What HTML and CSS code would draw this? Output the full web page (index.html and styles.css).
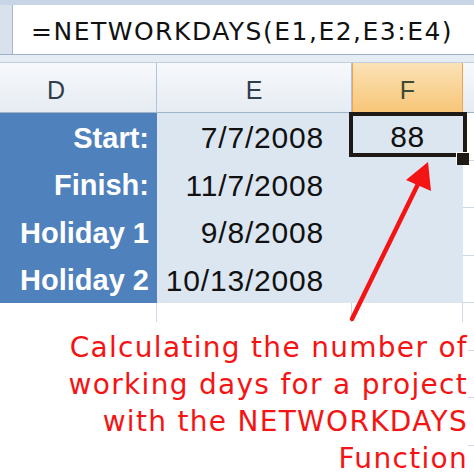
FILE: index.html
```html
<!DOCTYPE html>
<html>
<head>
<meta charset="utf-8">
<link rel="stylesheet" href="styles.css">
</head>
<body>
<div class="sheet">
  <div class="top-strip"></div>
  <div class="formula-bar">
    <div class="fx-stub"></div>
    <div class="fx-input">=NETWORKDAYS(E1,E2,E3:E4)</div>
  </div>
  <div class="bar-gap"></div>
  <div class="grid">
    <div class="hdr hdr-d">D</div>
    <div class="hdr">E</div>
    <div class="hdr hdr-active">F</div>
    <div class="hdr hdr-rest"></div>

    <div class="lbl">Start:</div><div class="val">7/7/2008</div><div class="res">88</div><div class="rest"></div>
    <div class="lbl">Finish:</div><div class="val">11/7/2008</div><div class="res"></div><div class="rest"></div>
    <div class="lbl">Holiday 1</div><div class="val">9/8/2008</div><div class="res"></div><div class="rest"></div>
    <div class="lbl">Holiday 2</div><div class="val">10/13/2008</div><div class="res"></div><div class="rest"></div>

    <div class="empty"></div><div class="empty"></div><div class="empty"></div><div class="rest"></div>
    <div class="empty"></div><div class="empty"></div><div class="empty"></div><div class="rest"></div>
    <div class="empty"></div><div class="empty"></div><div class="empty"></div><div class="rest"></div>
    <div class="empty"></div><div class="empty"></div><div class="empty"></div><div class="rest"></div>
  </div>

  <div class="selection"></div>
  <div class="fill-handle"></div>

  <div class="caption">Calculating the number of<br>working days for a project<br>with the NETWORKDAYS<br>Function</div>

  <svg class="arrow" width="474" height="474" viewBox="0 0 474 474">
    <line x1="352" y1="319" x2="420" y2="180" stroke="#f51414" stroke-width="4.5" stroke-linecap="round"/>
    <polygon points="428,162 406,180 431,191" fill="#f51414"/>
  </svg>
</div>
</body>
</html>
```

FILE: styles.css
```css
html, body {
  margin: 0;
  padding: 0;
}
body {
  width: 474px;
  height: 474px;
  overflow: hidden;
  background: #ffffff;
}
.sheet {
  position: relative;
  width: 474px;
  height: 474px;
  overflow: hidden;
}
.top-strip {
  height: 5px;
  background: #c8d5e6;
}
.formula-bar {
  display: flex;
  height: 49px;
  border-bottom: 1px solid #9fb1c8;
}
.fx-stub {
  width: 12px;
  background: #d9e1ec;
  border-right: 1px solid #a7b7cc;
}
.fx-input {
  flex: 1;
  background: #ffffff;
  font-family: "DejaVu Sans", sans-serif;
  font-size: 25px;
  letter-spacing: 1.5px;
  color: #111111;
  padding-left: 18px;
  padding-top: 4px;
  display: flex;
  align-items: center;
  white-space: nowrap;
}
.bar-gap {
  height: 7px;
  background: #e6ecf4;
  border-bottom: 1px solid #c3cfdf;
}
.grid {
  display: grid;
  grid-template-columns: 157px 195px 111px 1fr;
  grid-template-rows: 50px repeat(8, 47.5px);
  font-family: "Liberation Sans", Arial, sans-serif;
}
.hdr {
  box-sizing: border-box;
  background: linear-gradient(#f7f9fc, #e6ecf3);
  border-right: 1px solid #b3c3d7;
  border-bottom: 1px solid #9fb3ca;
  display: flex;
  align-items: center;
  justify-content: center;
  font-size: 25px;
  color: #2f3d4e;
  padding-top: 5px;
}
.hdr-d {
  padding-right: 44px;
}
.hdr-active {
  background: linear-gradient(#fbe2b6, #f7c678);
  border-left: 1px solid #f2a24a;
  border-right: 1px solid #f2a24a;
  border-bottom: 1px solid #f2a24a;
  color: #3e4a35;
}
.hdr-rest {
  border-right: none;
}
.lbl {
  background: #4f81bd;
  color: #ffffff;
  font-weight: bold;
  font-size: 29px;
  display: flex;
  align-items: center;
  justify-content: flex-end;
  padding-right: 8px;
  padding-top: 3px;
  white-space: nowrap;
}
.val {
  background: #dce6f1;
  color: #111111;
  font-size: 30px;
  letter-spacing: 0.8px;
  display: flex;
  align-items: center;
  justify-content: flex-end;
  padding-right: 28px;
  padding-top: 3px;
  white-space: nowrap;
}
.res {
  background: #dce6f1;
  color: #111111;
  font-size: 30px;
  letter-spacing: 0.5px;
  display: flex;
  align-items: center;
  justify-content: center;
  padding-top: 1px;
}
.rest {
  box-sizing: border-box;
  background: #ffffff;
  border-bottom: 1px solid #d0d7e5;
}
.empty {
  box-sizing: border-box;
  background: #ffffff;
  border-right: 1px solid #d0d7e5;
  border-bottom: 1px solid #d0d7e5;
}
.selection {
  position: absolute;
  left: 349px;
  top: 112px;
  width: 118px;
  height: 45px;
  box-sizing: border-box;
  border: 4.5px solid #1f1a16;
}
.fill-handle {
  position: absolute;
  left: 456px;
  top: 152px;
  width: 12px;
  height: 12px;
  background: #1f1a16;
  border-left: 1px solid #ffffff;
  border-top: 1px solid #ffffff;
}
.caption {
  position: absolute;
  left: 0;
  right: 6px;
  top: 322px;
  bottom: 0;
  background: #ffffff;
  padding-top: 7px;
  text-align: right;
  font-family: "DejaVu Sans", sans-serif;
  font-size: 28px;
  letter-spacing: 1.3px;
  line-height: 37px;
  color: #f51414;
  white-space: nowrap;
}
.arrow {
  position: absolute;
  left: 0;
  top: 0;
  pointer-events: none;
}
```
